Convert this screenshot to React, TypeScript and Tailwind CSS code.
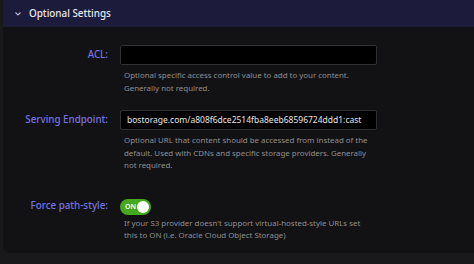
import type { ReactNode } from 'react'

const font = { fontFamily: '"Noto Sans", "Open Sans", sans-serif' }

const Row = ({
  label,
  children,
  help,
  gap = 'mt-[4px]',
}: {
  label: string
  children: ReactNode
  help: ReactNode
  gap?: string
}) => (
  <div className="flex">
    <div className="flex h-[20px] w-[105px] shrink-0 items-center justify-end text-[9.8px] font-medium text-[#7473e2]">
      {label}
    </div>
    <div className="ml-[12px] flex flex-col">
      <div className="flex h-[20px] items-center">{children}</div>
      <p className={`${gap} w-[252px] pl-[4px] text-[7.9px] leading-[12.5px] text-[#8e8e92]`}>{help}</p>
    </div>
  </div>
)

export default function App() {
  return (
    <div className="h-[264px] w-[474px] overflow-hidden bg-[#19191c]" style={font}>
      <div className="ml-[3px] h-[253px] overflow-hidden rounded-bl-[6px] bg-[#121214]">
        <div className="flex h-[27px] items-center bg-[#1c1b3b] pl-[11px] text-[9.9px] font-medium text-[#e8e8f0]">
          <svg width="8" height="6" viewBox="0 0 8 6" className="mr-[7px] mt-[1px]">
            <path d="M1.5 1.5 L4 4 L6.5 1.5" fill="none" stroke="#b8b8c8" strokeWidth="1.1" />
          </svg>
          Optional Settings
        </div>
        <div className="flex flex-col pt-[18px]">
          <Row label="ACL:" help="Optional specific access control value to add to your content. Generally not required.">
            <div className="h-[20px] w-[257px] rounded-[2px] border border-[#303033] bg-black" />
          </Row>
          <div className="h-[16px]" />
          <Row
            label="Serving Endpoint:"
            help="Optional URL that content should be accessed from instead of the default. Used with CDNs and specific storage providers. Generally not required."
          >
            <div className="flex h-[20px] w-[257px] items-center overflow-hidden whitespace-nowrap rounded-[2px] border border-[#303033] bg-black pl-[6px] text-[8.5px] text-[#e6e6e6]">
              bostorage.com/a808f6dce2514fba8eeb68596724ddd1:cast
            </div>
          </Row>
          <div className="h-[25px]" />
          <Row
            label="Force path-style:"
            gap="mt-[0px]"
            help="If your S3 provider doesn't support virtual-hosted-style URLs set this to ON (i.e. Oracle Cloud Object Storage)"
          >
            <div className="flex h-[16px] w-[31px] items-center justify-between rounded-full bg-[#45a81f] pl-[5px] pr-[2px]">
              <span className="text-[7px] font-semibold leading-none text-white">ON</span>
              <span className="h-[12px] w-[12px] rounded-full bg-white" />
            </div>
          </Row>
        </div>
      </div>
    </div>
  )
}
